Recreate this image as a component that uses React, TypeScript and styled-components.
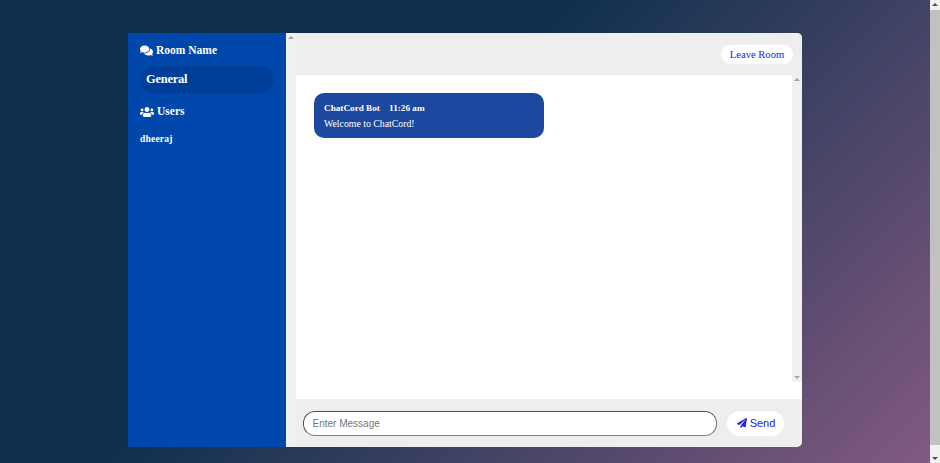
import React from "react";
import styled, { createGlobalStyle } from "styled-components";
import { FaComments, FaUsers, FaPaperPlane } from "react-icons/fa";

const Global = createGlobalStyle`
  * { box-sizing: border-box; }
  html, body { margin: 0; padding: 0; height: 100%; overflow: hidden; }
  #root { height: 100%; }
`;

const Page = styled.div`
  width: 940px;
  height: 463px;
  display: flex;
  font-family: "Liberation Serif", "Times New Roman", serif;
`;

const Backdrop = styled.div`
  width: 930px;
  height: 463px;
  padding: 33px 128px 16px;
  background: linear-gradient(135deg, #0d2f4d 0%, #0d2f4d 40%, #825a80 100%);
`;

const Strip = styled.div<{ $h?: number }>`
  width: 10px;
  height: ${(p) => (p.$h ? `${p.$h}px` : "auto")};
  flex: none;
  background: #f1f1f1;
  display: flex;
  flex-direction: column;
  align-items: center;
  justify-content: space-between;
  padding: 3px 0;
`;

const Arrow = styled.div<{ $down?: boolean; $color: string }>`
  width: 0;
  height: 0;
  border-left: 3px solid transparent;
  border-right: 3px solid transparent;
  ${(p) =>
    p.$down
      ? `border-top: 3px solid ${p.$color};`
      : `border-bottom: 3px solid ${p.$color};`}
`;

const Thumb = styled.div`
  width: 100%;
  flex: 1;
  margin: 4px 0 12px;
  background: #c1c1c1;
`;

const Window = styled.div`
  height: 414px;
  width: 674px;
  display: flex;
  border-radius: 0 5px 5px 0;
  overflow: hidden;
  background: #eeeeee;
`;

const Sidebar = styled.aside`
  width: 158px;
  flex: none;
  background: #0047ab;
  color: #fff;
  padding: 11px 12px;
`;

const SideHeading = styled.h3`
  margin: 0;
  display: flex;
  align-items: center;
  gap: 3px;
  font-size: 11.5px;
  line-height: 13px;
  height: 13px;
  font-weight: 700;
`;

const RoomPill = styled.div`
  margin: 9px 0 12px;
  height: 27px;
  width: 134px;
  padding: 0 6px;
  display: flex;
  align-items: center;
  border-radius: 14px;
  background: #003f99;
  font-size: 12.5px;
  letter-spacing: -0.28px;
  font-weight: 700;
`;

const UserName = styled.div`
  margin-top: 15px;
  font-size: 9.5px;
  line-height: 12px;
  font-weight: 700;
  letter-spacing: 0.2px;
`;

const Main = styled.main`
  flex: 1;
  display: flex;
  flex-direction: column;
  min-width: 0;
`;

const TopBar = styled.header`
  height: 42px;
  flex: none;
  display: flex;
  align-items: center;
  justify-content: flex-end;
  padding: 0 9px 0 0;
  background: #eeeeee;
`;

const LeaveButton = styled.button`
  width: 72px;
  height: 19px;
  border: 0;
  padding: 0;
  border-radius: 10px;
  background: #fff;
  color: #2020ee;
  font-family: "Liberation Serif", serif;
  font-size: 10.6px;
`;

const MessageRow = styled.div`
  height: 324px;
  flex: none;
  display: flex;
  background: #fff;
`;

const Messages = styled.section`
  flex: 1;
  padding: 18px;
`;

const Bubble = styled.div`
  width: 230px;
  height: 45px;
  padding: 9px 10px;
  border-radius: 10px;
  background: #1c48a0;
  color: #fff;
`;

const Meta = styled.p`
  margin: 0;
  font-size: 9.2px;
  line-height: 12px;
  font-weight: 700;
  white-space: pre;
`;

const Text = styled.p`
  margin: 4px 0 0;
  font-size: 9.8px;
  line-height: 12px;
`;

const Composer = styled.form`
  flex: 1;
  display: flex;
  align-items: center;
  padding: 0 18px 0 7px;
  gap: 10px;
`;

const MessageInput = styled.input`
  width: 414px;
  height: 25px;
  flex: none;
  padding: 0 8.5px;
  border: 1.5px solid;
  border-color: #505050 #707070 #808080 #505050;
  border-radius: 12px;
  background: #fff;
  font-family: "Liberation Sans", Arial, sans-serif;
  font-size: 10px;
  outline: none;
  &::placeholder { color: #757575; opacity: 1; }
`;

const SendButton = styled.button`
  width: 57px;
  height: 25px;
  flex: none;
  border: 0;
  padding: 0 0 0 1px;
  border-radius: 13px;
  background: #fff;
  color: #2020ee;
  display: flex;
  align-items: center;
  justify-content: center;
  gap: 3px;
  font-family: "Liberation Sans", Arial, sans-serif;
  font-size: 11px;
`;

export default function App() {
  return (
    <Page>
      <Global />
      <Backdrop>
        <Window>
          <Sidebar>
            <SideHeading>
              <FaComments size={13} /> Room Name
            </SideHeading>
            <RoomPill>General</RoomPill>
            <SideHeading>
              <FaUsers size={14} /> Users
            </SideHeading>
            <UserName>dheeraj</UserName>
          </Sidebar>
          <Strip>
            <Arrow $color="#a3a3a3" />
          </Strip>
          <Main>
            <TopBar>
              <LeaveButton type="button">Leave Room</LeaveButton>
            </TopBar>
            <MessageRow>
              <Messages>
                <Bubble>
                  <Meta>ChatCord Bot{"    "}11:26 am</Meta>
                  <Text>Welcome to ChatCord!</Text>
                </Bubble>
              </Messages>
              <Strip $h={307}>
                <Arrow $color="#a3a3a3" />
                <Arrow $down $color="#a3a3a3" />
              </Strip>
            </MessageRow>
            <Composer>
              <MessageInput placeholder="Enter Message" />
              <SendButton type="button">
                <FaPaperPlane size={10} /> Send
              </SendButton>
            </Composer>
          </Main>
        </Window>
      </Backdrop>
      <Strip>
        <Arrow $color="#505050" />
        <Thumb />
        <Arrow $down $color="#505050" />
      </Strip>
    </Page>
  );
}
